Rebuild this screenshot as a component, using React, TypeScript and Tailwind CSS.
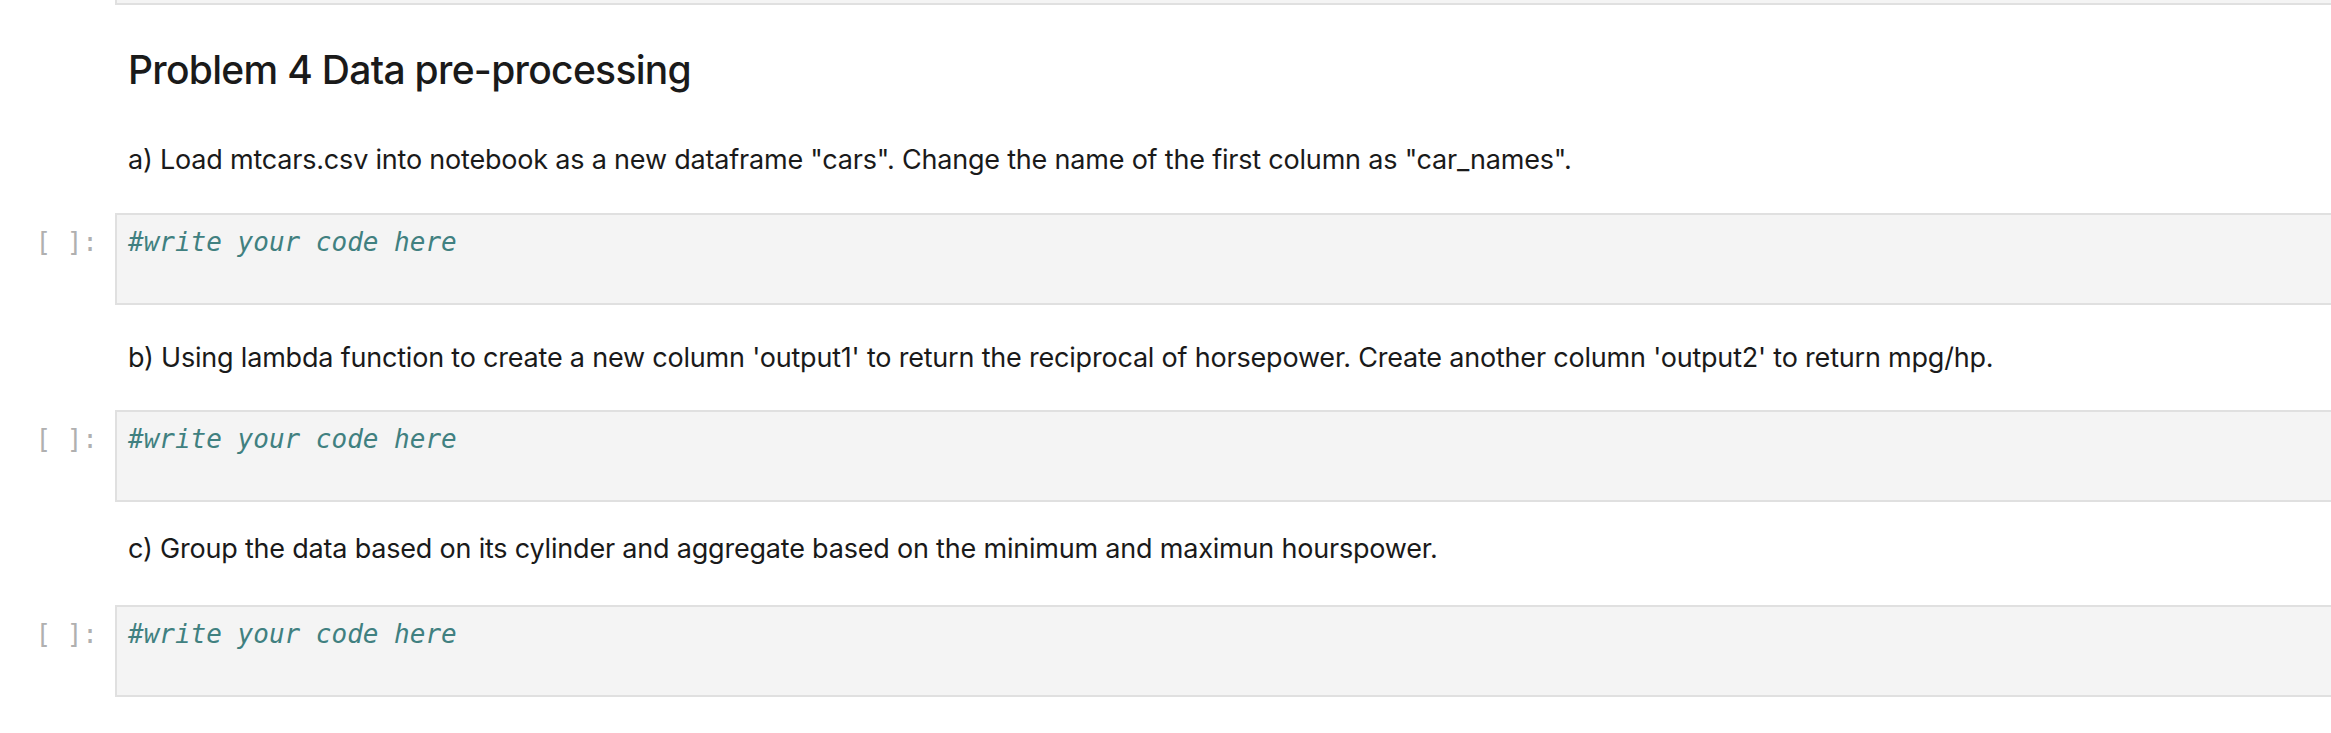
const sans = { fontFamily: "Inter, 'Noto Sans', sans-serif" };

function CodeCell({ className }: { className: string }) {
  return (
    <div className={`flex ${className}`}>
      <div className="w-[115px] shrink-0 pr-[17px] pt-[12px] text-right font-['DejaVu_Sans_Mono',monospace] text-[26px] leading-[34px] text-[#b0b0b0]">
        [ ]:
      </div>
      <div className="h-[92px] grow border-2 border-r-0 border-[#e0e0e0] bg-[#f4f4f4] pl-[11px] pt-[10px]">
        <span className="font-['DejaVu_Sans_Mono',monospace] text-[26px] italic leading-[34px] text-[#408080]">
          #write your code here
        </span>
      </div>
    </div>
  );
}

function Prose({ children, className }: { children: React.ReactNode; className: string }) {
  return (
    <p
      className={`pl-[128px] font-['Inter',sans-serif] text-[27px] leading-[40px] tracking-[-0.2px] text-[#1a1a1a] ${className}`}
    >
      {children}
    </p>
  );
}

export default function App() {
  return (
    <div className="min-h-screen w-full overflow-hidden bg-white" style={sans}>
      <div className="ml-[115px] h-[5px] border-b-2 border-l-2 border-[#e0e0e0] bg-[#f4f4f4]" />
      <h2 className="mt-[45px] pl-[128px] font-['Inter',sans-serif] text-[39px] font-medium leading-[40px] tracking-[-0.7px] text-[#1a1a1a]">
        Problem 4 Data pre-processing
      </h2>
      <Prose className="mt-[50px]">
        a) Load mtcars.csv into notebook as a new dataframe "cars". Change the name of the first column as "car_names".
      </Prose>
      <CodeCell className="mt-[33px]" />
      <Prose className="mt-[33px]">
        b) Using lambda function to create a new column 'output1' to return the reciprocal of horsepower. Create another column 'output2' to return mpg/hp.
      </Prose>
      <CodeCell className="mt-[32px]" />
      <Prose className="mt-[27px]">
        c) Group the data based on its cylinder and aggregate based on the minimum and maximun hourspower.
      </Prose>
      <CodeCell className="mt-[36px]" />
    </div>
  );
}
